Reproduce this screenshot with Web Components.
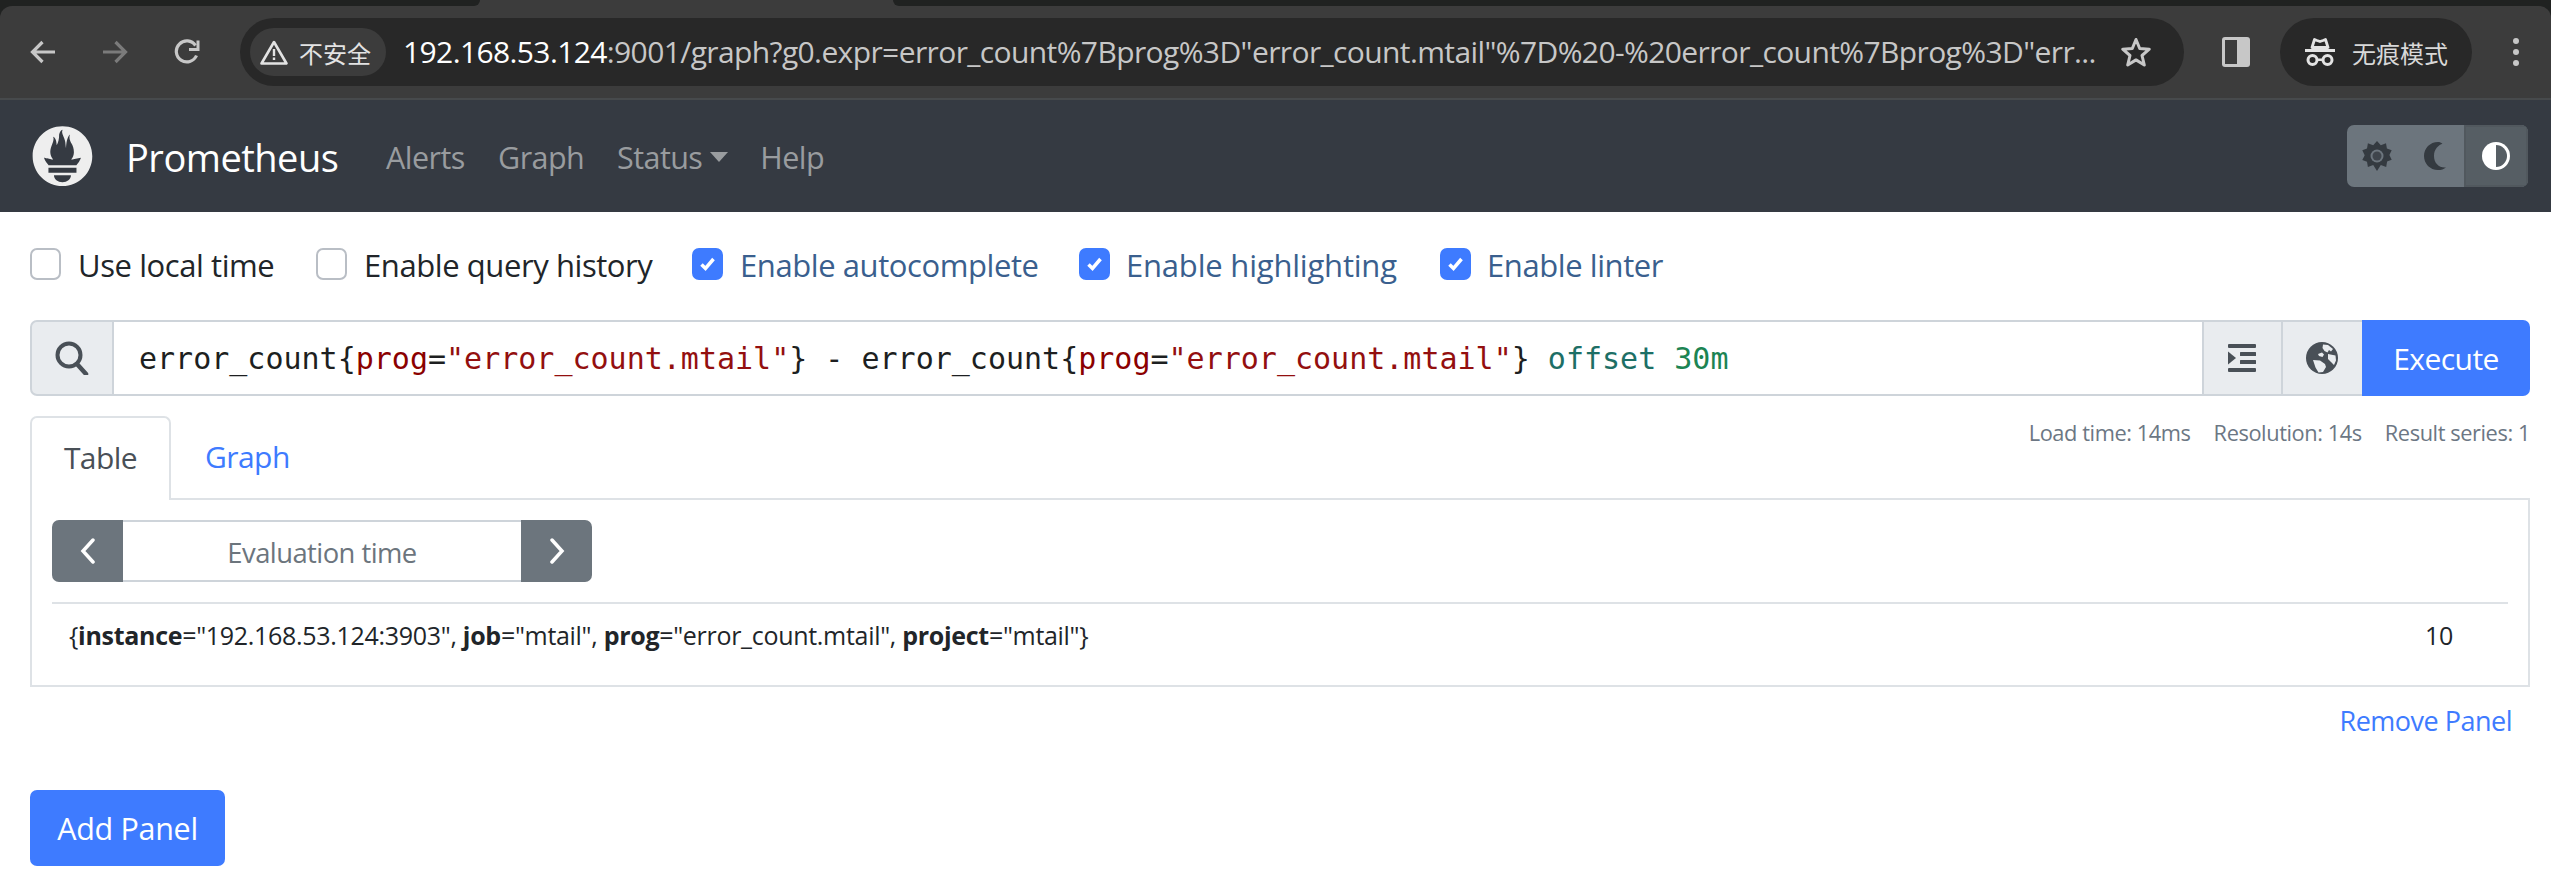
<!DOCTYPE html>
<html><head><meta charset="utf-8"><style>
html,body{margin:0;padding:0;background:#fff;height:877px;overflow:hidden}
body{font-family:"Open Sans","Noto Sans CJK SC",sans-serif;--blue:#3e7bff;--grey:#6c757d}
main-area{display:block}
</style></head><body>
<chrome-bar></chrome-bar>
<prom-nav></prom-nav>
<main-area>
  <option-row></option-row>
  <expr-box></expr-box>
  <panel-tabs></panel-tabs>
  <result-panel></result-panel>
  <remove-link></remove-link>
  <add-panel></add-panel>
</main-area>
<script>
function def(name,html){customElements.define(name,class extends HTMLElement{constructor(){super();this.attachShadow({mode:'open'}).innerHTML=html}})}
def('chrome-bar',`<style>
:host{display:block;height:100px;background:#202221;color:#c7c7c7}
.strip{display:flex;height:6px;background:#3c3c3c}
.d{background:#202221}.d1{width:480px;border-bottom-right-radius:6px}.d2{flex:1;margin-left:413px;border-bottom-left-radius:6px}
.tb{height:92px;background:#3c3c3c;border-bottom:2px solid #474a4c;border-radius:12px 12px 0 0;display:flex;align-items:center;padding-left:30px;box-sizing:content-box}
.nav{display:flex;gap:46px;width:210px}
svg{display:block;flex:none}
.addr{width:1944px;height:68px;border-radius:34px;background:#282828;display:flex;align-items:center;padding-left:10px;box-sizing:border-box}
.chip{width:136px;height:48px;border-radius:24px;background:#3c3c3c;display:flex;align-items:center;padding-left:9px;box-sizing:border-box;gap:10px;font:24px "Noto Sans CJK SC",sans-serif;color:#e3e3e3}
.url{margin-left:17px;width:1692px;flex:none;white-space:nowrap;font:30px "Open Sans",sans-serif;letter-spacing:-.61px;line-height:42px}
.url b{font-weight:400;color:#fff}
.star{margin-left:24px}
.side{margin-left:38px}
.inc{margin-left:30px;width:192px;height:68px;border-radius:34px;background:#282828;display:flex;align-items:center;padding-left:25px;box-sizing:border-box;gap:17px;font:24px "Noto Sans CJK SC",sans-serif;color:#d8d8d8}
.kebab{margin-left:41px}
</style>
<div class="strip"><div class="d d1"></div><div class="d d2"></div></div>
<div class="tb">
<div class="nav">
<svg width="26" height="26" viewBox="0 0 26 26" fill="none" stroke="#c7c7c7" stroke-width="3.2"><path d="M25 13H3M12.5 3 2.5 13l10 10"/></svg>
<svg width="26" height="26" viewBox="0 0 26 26" fill="none" stroke="#7b7b7b" stroke-width="3.2"><path d="M1 13h22M13.500 3l10 10-10 10"/></svg>
<svg width="26" height="26" viewBox="0 0 26 26" fill="none" stroke="#c7c7c7" stroke-width="3.200"><path d="M22.500 16.500A10.500 10.500 0 1 1 21.500 6.500"/><path d="M24 1.500V10.500H15" stroke-width="3"/></svg>
</div>
<div class="addr">
<div class="chip"><svg width="30" height="26" viewBox="0 0 30 26"><path d="M15 3 27.500 24.500H2.500Z" fill="none" stroke="#e3e3e3" stroke-width="2.600" stroke-linejoin="round"/><path d="M13.800 10h2.400v7h-2.400zM13.800 18.500h2.400v2.500h-2.400z" fill="#e3e3e3"/></svg><span>不安全</span></div>
<div class="url"><b>192.168.53.124</b>:9001/graph?g0.expr=error_count%7Bprog%3D"error_count.mtail"%7D%20-%20error_count%7Bprog%3D"err...</div>
<svg class="star" width="34" height="32" viewBox="0 0 34 32" fill="none" stroke="#c7c7c7" stroke-width="3"><path d="M17 3.500 20.700 12.500 30.300 13.200 23 19.500 25.300 29 17 23.900 8.700 29 11 19.500 3.700 13.200 13.300 12.500Z" stroke-linejoin="round"/></svg>
</div>
<svg class="side" width="28" height="30" viewBox="0 0 28 30"><rect width="28" height="30" rx="3" fill="#c7c7c7"/><rect x="3" y="3" width="12" height="24" fill="#3c3c3c"/></svg>
<div class="inc"><svg width="30" height="28" viewBox="0 0 30 28" fill="#e3e3e3"><path d="M9.500 1.500 12 2.500 15 3.500 18 2.500 20.500 1.500 23 9.500H7Z" fill="none" stroke="#e3e3e3" stroke-width="2.800" stroke-linejoin="round"/><rect y="11" width="30" height="3"/><circle cx="7.500" cy="22" r="4.500" fill="none" stroke="#e3e3e3" stroke-width="3"/><circle cx="22.500" cy="22" r="4.500" fill="none" stroke="#e3e3e3" stroke-width="3"/><rect x="12" y="20.500" width="6" height="2.500"/></svg><span>无痕模式</span></div>
<svg class="kebab" width="6" height="28" viewBox="0 0 6 28" fill="#c7c7c7"><circle cx="3" cy="3" r="3"/><circle cx="3" cy="14" r="3"/><circle cx="3" cy="25" r="3"/></svg>
</div>`);
def('theme-toggle',`<style>
:host{display:flex;width:181px;height:62px;border-radius:7px;overflow:hidden;background:#6c757d}
div{display:flex;align-items:center;justify-content:center}
.a{width:59px}.b{width:58px}.c{flex:1;background:#565e64;border:2px solid #51585e;box-sizing:border-box}
</style>
<div class="a"><svg width="30" height="30" viewBox="0 0 30 30"><path d="M15 0l3.800 4.200 5.200-2 .9 5.300 4.800 1.800-2.300 4.700 2.300 4.800-4.600 1.800-.9 5.300-5.400-2L15 30l-3.800-6-5.300 2-.9-5.300L.3 19l2.400-4.700L.3 9.300 5 7.500 5.900 2.200l5.300 2z" fill="#343a40"/><circle cx="15" cy="15" r="6.500" fill="#6c757d"/><circle cx="15" cy="15" r="4.500" fill="#343a40" fill-opacity="0.8"/></svg></div>
<div class="b"><svg width="22" height="28" viewBox="0 0 22 28"><path d="M14 0C6 0 0 6.300 0 14s6 14 14 14c3.200 0 6-1 8-2.600-6.800.6-12-4-12-11.400S15 3 18.500 1.800C17 .6 15.800 0 14 0Z" fill="#343a40"/></svg></div>
<div class="c"><svg width="28" height="28" viewBox="0 0 28 28"><circle cx="14" cy="14" r="14" fill="#fff"/><path d="M14 3a11 11 0 0 1 0 22Z" fill="#565e64"/></svg></div>`);
def('prom-nav',`<style>
:host{display:flex;align-items:center;height:112px;background:#353a42;padding:0 23px 0 32px;font-family:"Open Sans",sans-serif}
svg{display:block}
.brand{margin-left:33px;color:#fff;font-size:38px;letter-spacing:-.5px;width:260px;padding-top:2px}
.links{display:flex;color:#999c9f;font-size:30.500px;letter-spacing:-.55px;flex:1;align-items:center;padding-top:2px}
.links span{display:block}
.caret{width:0;height:0;border:9px solid transparent;border-top:10px solid #999c9f;border-bottom:0;margin-left:8px}
</style>
<svg width="61" height="60" viewBox="0 0 113.500 114"><path fill="#eee" d="M56.667,0.667C25.372,0.667,0,26.036,0,57.332c0,31.295,25.372,56.666,56.667,56.666s56.666-25.371,56.666-56.666 C113.333,26.036,87.961,0.667,56.667,0.667z M56.667,106.722c-8.904,0-16.123-5.948-16.123-13.283H72.79 C72.79,100.773,65.571,106.722,56.667,106.722z M83.297,89.04H30.034v-9.658h53.264V89.04z M83.106,74.411h-52.92 c-0.176-0.203-0.356-0.403-0.526-0.609c-5.452-6.62-6.736-10.076-7.983-13.598c-0.021-0.116,6.611,1.355,11.314,2.413 c0,0,2.42,0.56,5.958,1.205c-3.397-3.982-5.414-9.044-5.414-14.218c0-11.359,8.712-21.285,5.569-29.308 c3.059,0.249,6.331,6.456,6.552,16.161c3.252-4.494,4.613-12.701,4.613-17.733c0-5.21,3.433-11.262,6.867-11.469 c-3.061,5.045,0.793,9.37,4.219,20.099c1.285,4.03,1.121,10.812,2.113,15.113C63.797,33.534,65.333,20.5,71,16 c-2.5,5.667,0.37,12.758,2.333,16.167c3.167,5.5,5.087,9.667,5.087,17.548c0,5.284-1.951,10.259-5.242,14.148 c3.742-0.702,6.326-1.335,6.326-1.335l12.152-2.371C91.657,60.156,89.891,67.418,83.106,74.411z"/></svg>
<div class="brand">Prometheus</div>
<div class="links"><span style="width:112px">Alerts</span><span style="width:119px">Graph</span><span>Status</span><span class="caret"></span><span style="margin-left:32px">Help</span></div>
<theme-toggle></theme-toggle>`);
def('check-opt',`<style>
:host{display:flex;align-items:center;gap:17px;font-size:31px;letter-spacing:-.42px;color:#212529}
:host([on]){color:#3a5f8e}
.b{width:31px;height:32px;border:2px solid #b9bec5;border-radius:7px;box-sizing:border-box;background:#fff;display:block;flex:none}
:host([on]) .b{background:#3e7bff;border-color:#3e7bff;display:flex;align-items:center;justify-content:center}
svg{display:none}:host([on]) svg{display:block}
.t{padding-top:2px}
</style><span class="b"><svg width="17" height="16" viewBox="0 0 17 16"><path d="M2.500 8.500 6.500 12.500 14.500 3" fill="none" stroke="#fff" stroke-width="3.500"/></svg></span><span class="t"><slot></slot></span>`);
def('option-row',`<style>
:host{display:flex;height:32px;margin:36px 0 0 30px;white-space:nowrap}
check-opt{flex:none}
</style>
<check-opt style="width:286px">Use local time</check-opt><check-opt style="width:376px">Enable query history</check-opt><check-opt on style="width:387px">Enable autocomplete</check-opt><check-opt on style="width:361px;letter-spacing:-.2px;gap:16px">Enable highlighting</check-opt><check-opt on style="gap:16px">Enable linter</check-opt>`);
def('expr-box',`<style>
:host{display:flex;height:76px;margin:40px 21px 0 30px;box-sizing:border-box}
.g{background:#e9ecef;border:2px solid #ced4da;box-sizing:border-box;display:flex;align-items:center;justify-content:center}
.s{width:84px;border-radius:7px 0 0 7px}
.i{flex:1;border-top:2px solid #ced4da;border-bottom:2px solid #ced4da;display:flex;align-items:center;padding:0 0 0 25px;font:30px "DejaVu Sans Mono",monospace;white-space:pre;color:#1d1f21;box-sizing:border-box}
.f{width:79px;border-right-width:0;padding-right:2px}.w{width:81px;border-right:0;padding-right:2px}
.x{width:168px;background:#3e7bff;color:#fff;border-radius:0 7px 7px 0;display:flex;align-items:center;justify-content:center;font-size:30px;letter-spacing:-.55px}
.l{color:#8b0000}.st{color:#930f0f}.k{color:#1d6f66}.n{color:#1c8453}
</style>
<div class="g s"><svg width="34" height="34" viewBox="0 0 34 34" fill="none" stroke="#495057" stroke-width="4"><circle cx="14" cy="14" r="11.500"/><path d="M22 23l9 10" stroke-linecap="round" stroke-width="4.500"/></svg></div>
<div class="i"><span>error_count{<span class="l">prog</span>=<span class="st">"error_count.mtail"</span>} - error_count{<span class="l">prog</span>=<span class="st">"error_count.mtail"</span>} <span class="k">offset</span> <span class="n">30m</span></span></div>
<div class="g f"><svg width="28" height="28" viewBox="0 0 28 28" fill="#495057"><rect width="28" height="4" rx="1"/><rect x="12" y="8" width="16" height="4" rx=".5"/><rect x="12" y="16" width="16" height="4" rx=".5"/><rect y="24" width="28" height="4" rx="1"/><path d="M0 7.500 8 14 0 20.500Z"/></svg></div>
<div class="g w"><svg width="32" height="32" viewBox="0 0 32 32"><circle cx="16" cy="16" r="16" fill="#495057"/><path d="M17 2.500l5 .5 5 4-2 2.500-2-1.500-1.500 2.500-3-1.500-2-3zM12 12l4-1.500 2 2-1.500 2.500-3.500-1zM22 12l7.500 1.500.5 5-2 4.500-3-3-3-3zM7 18l7 .5 5 3.500 1 3-3 5-4.500.5-3-5z" fill="#e9ecef"/></svg></div>
<div class="x">Execute</div>`);
def('panel-tabs',`<style>
:host{display:flex;justify-content:space-between;height:84px;margin:20px 21px 0 30px;border-bottom:2px solid #dee2e6;box-sizing:border-box}
.t{width:141px;height:84px;box-sizing:border-box;border:2px solid #dee2e6;border-bottom:0;border-radius:7px 7px 0 0;background:#fff;display:flex;align-items:center;justify-content:center;font-size:30px;letter-spacing:-.55px;color:#495057;padding-bottom:4px}
.g{margin-left:34px;height:80px;display:flex;align-items:center;font-size:30px;letter-spacing:-.55px;color:#3e7bff}
.l{display:flex}
.s{display:flex;gap:23px;font-size:21.800px;letter-spacing:-.42px;color:#6c7784;height:32px;align-items:center;padding-right:0}
</style>
<div class="l"><div class="t">Table</div><div class="g">Graph</div></div>
<div class="s"><span>Load time: 14ms</span><span>Resolution: 14s</span><span>Result series: 1</span></div>`);
def('result-panel',`<style>
:host{display:block;margin:0 21px 0 30px;border:2px solid #dee2e6;border-top:0;padding:20px 20px 17px;height:187px;box-sizing:border-box}
.e{display:flex;height:62px;width:540px}
.b{width:71px;background:#6c757d;display:flex;align-items:center;justify-content:center}
.b.l{border-radius:7px 0 0 7px}.b.r{border-radius:0 7px 7px 0}
.m{flex:1;border-top:2px solid #ced4da;border-bottom:2px solid #ced4da;display:flex;align-items:center;justify-content:center;font-size:27.400px;letter-spacing:-.55px;color:#6c757d;box-sizing:border-box;padding-top:2px}
.row{margin-top:20px;border-top:2px solid #dee2e6;height:64px;display:flex;justify-content:space-between;align-items:center;font-size:25px;letter-spacing:-.3px;color:#212529;padding:0 55px 0 17px;box-sizing:border-box}
b{font-weight:700}
</style>
<div class="e"><div class="b l"><svg width="16" height="26" viewBox="0 0 16 26" fill="none" stroke="#fff" stroke-width="3.500" stroke-linecap="round"><path d="M13 2 3 13l10 11"/></svg></div><div class="m">Evaluation time</div><div class="b r"><svg width="16" height="26" viewBox="0 0 16 26" fill="none" stroke="#fff" stroke-width="3.500" stroke-linecap="round"><path d="M3 2l10 11L3 24"/></svg></div></div>
<div class="row"><span>{<b>instance</b>="192.168.53.124:3903", <b>job</b>="mtail", <b>prog</b>="error_count.mtail", <b>project</b>="mtail"}</span><span>10</span></div>`);
def('remove-link',`<style>
:host{display:flex;justify-content:flex-end;height:66px;align-items:center;margin-right:39px;font-size:27px;letter-spacing:-.5px;color:#3e7bff}
</style><span>Remove Panel</span>`);
def('add-panel',`<style>
:host{display:flex;width:195px;height:76px;margin:37px 0 0 30px;border-radius:7px;background:#3e7bff;color:#fff;align-items:center;justify-content:center;font-size:30.500px;letter-spacing:-.3px}
</style><span>Add Panel</span>`);
</script>
</body></html>
